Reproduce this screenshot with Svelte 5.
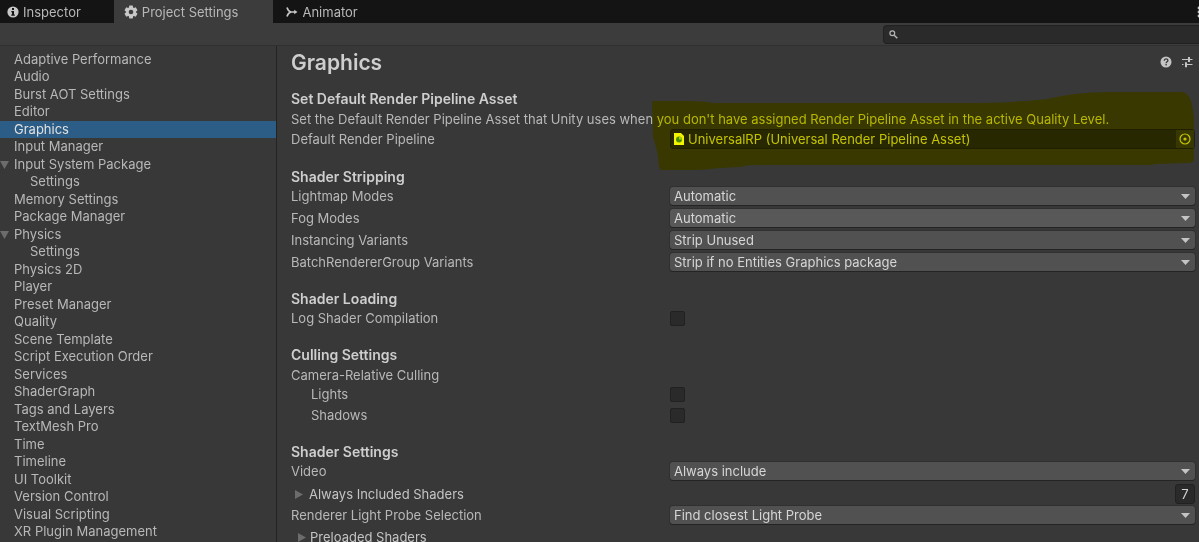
<script>
    const tabs = ['Inspector', 'Project Settings', 'Animator'];
    let activeTab = 'Project Settings';

    const pages = [
        { name: 'Adaptive Performance' },
        { name: 'Audio' },
        { name: 'Burst AOT Settings' },
        { name: 'Editor' },
        { name: 'Graphics' },
        { name: 'Input Manager' },
        { name: 'Input System Package', open: true },
        { name: 'Settings', child: true },
        { name: 'Memory Settings' },
        { name: 'Package Manager' },
        { name: 'Physics', open: true },
        { name: 'Settings', child: true },
        { name: 'Physics 2D' },
        { name: 'Player' },
        { name: 'Preset Manager' },
        { name: 'Quality' },
        { name: 'Scene Template' },
        { name: 'Script Execution Order' },
        { name: 'Services' },
        { name: 'ShaderGraph' },
        { name: 'Tags and Layers' },
        { name: 'TextMesh Pro' },
        { name: 'Time' },
        { name: 'Timeline' },
        { name: 'UI Toolkit' },
        { name: 'Version Control' },
        { name: 'Visual Scripting' },
        { name: 'XR Plugin Management' }
    ];
    let selected = 4;

    const stripping = [
        { id: 'lightmap', label: 'Lightmap Modes', options: ['Automatic', 'Custom'] },
        { id: 'fog', label: 'Fog Modes', options: ['Automatic', 'Custom'], hot: true },
        { id: 'instancing', label: 'Instancing Variants', options: ['Strip Unused', 'Strip All', 'Keep All'] },
        { id: 'brg', label: 'BatchRendererGroup Variants', options: ['Strip if no Entities Graphics package', 'Strip All', 'Keep All'] }
    ];

    let search = '';
    let shaderCount = '7';
</script>

<div class="window">
    <div class="tabs" role="tablist">
        {#each tabs as tab}
            <button type="button" role="tab" class="tab" class:active={tab === activeTab}
                aria-selected={tab === activeTab} on:click={() => (activeTab = tab)}>
                {#if tab === 'Inspector'}
                    <svg width="12" height="12" viewBox="0 0 12 12">
                        <circle cx="6" cy="6" r="5.600" fill="#c8c8c8" />
                        <path d="M5 2h2v2H5zM4.300 5H7v3.600h.8v1.200H4.300V8.600H5V6.200h-.7z" fill="#141414" />
                    </svg>
                {:else if tab === 'Project Settings'}
                    <svg width="14" height="14" viewBox="0 0 14 14">
                        <g fill="#c8c8c8">
                            <rect x="5" y="0.500" width="4" height="13" rx="0.800" />
                            <rect x="5" y="0.500" width="4" height="13" rx="0.800" transform="rotate(60 7 7)" />
                            <rect x="5" y="0.500" width="4" height="13" rx="0.800" transform="rotate(120 7 7)" />
                            <circle cx="7" cy="7" r="5" />
                        </g>
                        <circle cx="7" cy="7" r="2.300" fill="#3c3c3c" />
                    </svg>
                {:else}
                    <svg width="12" height="12" viewBox="0 0 12 12">
                        <path d="M1 1.500Q2 5 4.800 6Q2 7 1 10.500M4.500 6h5" fill="none" stroke="#c8c8c8" stroke-width="1.600" />
                        <path d="M8.200 3.700L11.500 6L8.200 8.300z" fill="#c8c8c8" />
                    </svg>
                {/if}
                <span>{tab}</span>
            </button>
        {/each}
        <button type="button" class="more" aria-label="More">
            <svg width="4" height="12" viewBox="0 0 4 12" fill="#c8c8c8">
                <circle cx="2" cy="2" r="1.400" />
                <circle cx="2" cy="6" r="1.400" />
                <circle cx="2" cy="10" r="1.400" />
            </svg>
        </button>
    </div>

    <div class="toolbar">
        <div class="search">
            <svg width="9" height="9" viewBox="0 0 9 9" fill="none" stroke="#b4b4b4">
                <circle cx="3.300" cy="3.300" r="2.400" stroke-width="1.200" />
                <path d="M5.200 5.200L8.300 8.300" stroke-width="1.500" />
            </svg>
            <input type="text" aria-label="Search" bind:value={search} />
        </div>
    </div>

    <div class="body">
        <nav>
            <ul>
                {#each pages as page, i}
                    <li class:selected={i === selected} class:child={page.child}>
                        {#if page.open}
                            <svg class="fold" width="9" height="8" viewBox="0 0 9 8"><path d="M0 0h9L4.500 8z" fill="#6c6c6c" /></svg>
                        {/if}
                        <a href="#{page.name}" on:click|preventDefault={() => (selected = i)}>{page.name}</a>
                    </li>
                {/each}
            </ul>
        </nav>

        <main>
            <header>
                <h1>Graphics</h1>
                <button type="button" aria-label="Help">
                    <svg width="12" height="12" viewBox="0 0 12 12">
                        <circle cx="6" cy="6" r="5.500" fill="#c4c4c4" />
                        <path d="M4.200 4.700C4.200 2.400 7.900 2.400 7.900 4.500C7.900 5.700 6.100 5.800 6.100 7.200" fill="none" stroke="#383838" stroke-width="1.300" />
                        <rect x="5.400" y="8" width="1.400" height="1.400" fill="#383838" />
                    </svg>
                </button>
                <button type="button" aria-label="Presets">
                    <svg width="12" height="12" viewBox="0 0 12 12" fill="#c4c4c4">
                        <path d="M1 3h6v1H1zM9 3h2.500v1H9zM7 1h2v5H7zM1 8h1.500v1H1zM6 8h5.500v1H6zM4 6.300h2v5H4z" />
                    </svg>
                </button>
            </header>

            <section>
                <h2>Set Default Render Pipeline Asset</h2>
                <p>Set the Default Render Pipeline Asset that Unity uses when you don't have assigned Render Pipeline Asset in the active Quality Level.</p>
                <div class="row tall">
                    <label for="pipeline">Default Render Pipeline</label>
                    <div class="object">
                        <svg width="10" height="12" viewBox="0 0 10 12">
                            <path d="M0 0h7l3 3v9H0z" fill="#f4f4f4" />
                            <circle cx="5" cy="6.500" r="3" fill="#4a8a30" />
                            <path d="M5 6.500V3.500A3 3 0 0 1 8 6.500z" fill="#a8d040" />
                        </svg>
                        <input id="pipeline" type="text" readonly value="UniversalRP (Universal Render Pipeline Asset)" />
                        <button type="button" class="picker" aria-label="Select asset">
                            <svg width="12" height="12" viewBox="0 0 12 12">
                                <circle cx="6" cy="6" r="5" fill="none" stroke="#c4c4c4" stroke-width="1.200" />
                                <circle cx="6" cy="6" r="1.600" fill="#c4c4c4" />
                            </svg>
                        </button>
                        <!-- hand-drawn marker stroke -->
                        <svg class="marker" viewBox="0 0 542 79" preserveAspectRatio="none">
                            <path d="M0 9L38 9Q50 9 62 11H328Q370 10 395 7Q425 0 455 0H529Q536 0 539 9Q542 18 542 28V67Q542 71 536 71L503 72L500 73H103Q95 73 88 75L68 76Q55 78 40 78H14Q8 79 7 75Q6 58 1 46Z" fill="#ffff00" />
                        </svg>
                    </div>
                </div>
            </section>

            <section>
                <h2>Shader Stripping</h2>
                {#each stripping as field}
                    <div class="row">
                        <label for={field.id}>{field.label}</label>
                        <div class="select" class:hot={field.hot}>
                            <select id={field.id}>
                                {#each field.options as option}
                                    <option>{option}</option>
                                {/each}
                            </select>
                            <svg width="9" height="5" viewBox="0 0 9 5"><path d="M0 0h9L4.500 5z" fill="#c4c4c4" /></svg>
                        </div>
                    </div>
                {/each}
            </section>

            <section>
                <h2>Shader Loading</h2>
                <div class="row">
                    <label for="log">Log Shader Compilation</label>
                    <input id="log" type="checkbox" />
                </div>
            </section>

            <section>
                <h2>Culling Settings</h2>
                <p>Camera-Relative Culling</p>
                <div class="row indent">
                    <label for="lights">Lights</label>
                    <input id="lights" type="checkbox" />
                </div>
                <div class="row indent">
                    <label for="shadows">Shadows</label>
                    <input id="shadows" type="checkbox" />
                </div>
            </section>

            <section>
                <h2>Shader Settings</h2>
                <div class="row">
                    <label for="video">Video</label>
                    <div class="select">
                        <select id="video">
                            <option>Always include</option>
                            <option>Don't include</option>
                        </select>
                        <svg width="9" height="5" viewBox="0 0 9 5"><path d="M0 0h9L4.500 5z" fill="#c4c4c4" /></svg>
                    </div>
                </div>
                <div class="row">
                    <button type="button" class="foldout">
                        <svg width="8" height="9" viewBox="0 0 8 9"><path d="M0 0L8 4.500L0 9z" fill="#6c6c6c" /></svg>
                        Always Included Shaders
                    </button>
                    <input class="count" type="text" aria-label="Always Included Shaders count" bind:value={shaderCount} />
                </div>
                <div class="row">
                    <label for="probe">Renderer Light Probe Selection</label>
                    <div class="select">
                        <select id="probe">
                            <option>Find closest Light Probe</option>
                        </select>
                        <svg width="9" height="5" viewBox="0 0 9 5"><path d="M0 0h9L4.500 5z" fill="#c4c4c4" /></svg>
                    </div>
                </div>
                <div class="row">
                    <button type="button" class="foldout nested">
                        <svg width="8" height="9" viewBox="0 0 8 9"><path d="M0 0L8 4.500L0 9z" fill="#6c6c6c" /></svg>
                        Preloaded Shaders
                    </button>
                </div>
            </section>
        </main>
    </div>
</div>

<style>
    :global(body) {
        margin: 0;
        background: #383838;
    }

    .window {
        height: 100vh;
        display: flex;
        flex-direction: column;
        overflow: hidden;
        background: #383838;
        color: #b8b8b8;
        font-family: Inter, "Liberation Sans", sans-serif;
        font-size: 13px;
    }

    button,
    input,
    select {
        margin: 0;
        padding: 0;
        border: 0;
        background: none;
        color: inherit;
        font: inherit;
        outline: none;
    }

    svg {
        flex: none;
        display: block;
    }

    /* Tabs */
    .tabs {
        display: flex;
        flex: none;
        height: 23px;
        background: #141414;
    }

    .tab {
        display: flex;
        align-items: center;
        gap: 4px;
        padding: 0 33px 0 7px;
    }

    .tab.active {
        padding-left: 10px;
        padding-right: 35px;
        background: #3c3c3c;
    }

    .tab:nth-child(3) {
        padding-left: 13px;
    }

    .more {
        margin-left: auto;
        margin-right: -2px;
    }

    .toolbar {
        display: flex;
        flex: none;
        justify-content: flex-end;
        height: 23px;
        padding: 2px 0 1px;
        box-sizing: border-box;
        background: #3c3c3c;
        border-bottom: 1px solid #303030;
    }

    .search {
        display: flex;
        align-items: center;
        gap: 6px;
        width: 316px;
        padding-left: 5px;
        box-sizing: border-box;
        background: #2a2a2a;
        border: 1px solid #212121;
        border-right: 0;
        border-radius: 4px 0 0 4px;
    }

    .search input {
        flex: 1;
        min-width: 0;
    }

    .body {
        display: flex;
        flex: 1;
        min-height: 0;
    }

    /* Page list */
    nav {
        flex: none;
        width: 276px;
        padding-top: 5px;
        border-right: 1px solid #232323;
        overflow: hidden;
    }

    ul {
        margin: 0;
        padding: 0;
        list-style: none;
    }

    li {
        position: relative;
        display: flex;
        height: 17px;
        padding-left: 14px;
        line-height: 17px;
    }

    li:nth-child(even) {
        height: 18px;
    }

    li.child {
        padding-left: 30px;
    }

    li.selected {
        background: #2c5d87;
        color: #e0e0e0;
    }

    li a {
        flex: 1;
        color: inherit;
        text-decoration: none;
    }

    .fold {
        position: absolute;
        left: 0;
        top: 5px;
    }

    /* Settings pane */
    main {
        flex: 1;
        min-width: 0;
        padding: 0 4px 0 14px;
    }

    header {
        display: flex;
        align-items: center;
        gap: 9px;
        height: 32px;
        padding-right: 2px;
    }

    h1 {
        flex: 1;
        margin: 0;
        font-size: 21px;
        font-weight: 600;
        color: #cecece;
    }

    section {
        margin-top: 18px;
    }

    header + section {
        margin-top: 11px;
    }

    h2 {
        margin: 0;
        font-size: 14px;
        font-weight: 600;
        line-height: 20px;
        color: #cecece;
    }

    p {
        margin: 0;
        line-height: 20px;
        white-space: nowrap;
    }

    .row {
        display: grid;
        grid-template-columns: 379px minmax(0, 1fr);
        align-items: center;
        height: 18px;
    }

    .row + .row {
        margin-top: 4px;
    }

    .row.indent + .row.indent {
        margin-top: 3px;
    }

    .row.tall {
        height: 20px;
    }

    .row.indent label {
        padding-left: 20px;
    }

    .object {
        position: relative;
        display: flex;
        align-items: center;
        gap: 4px;
        height: 20px;
        padding-left: 3px;
        box-sizing: border-box;
        background: #282828;
        border: 1px solid #202020;
        border-radius: 3px;
        color: #c4c4c4;
    }

    .object input {
        flex: 1;
        min-width: 0;
    }

    .picker {
        display: flex;
        align-items: center;
        align-self: stretch;
        padding: 0 3px;
        background: #373737;
    }

    .marker {
        position: absolute;
        left: -19px;
        top: -38px;
        width: calc(100% + 19px);
        height: 79px;
        mix-blend-mode: multiply;
        pointer-events: none;
    }

    .select {
        display: flex;
        align-items: center;
        height: 18px;
        padding-right: 5px;
        background: #515151;
        border-radius: 3px;
        box-shadow: 0 1px 0 #242424, 0 0 0 1px #303030;
        color: #d6d6d6;
    }

    .select.hot {
        background: #585858;
    }

    .select select {
        flex: 1;
        min-width: 0;
        padding-left: 4px;
        appearance: none;
        line-height: 18px;
    }

    input[type="checkbox"] {
        width: 15px;
        height: 15px;
        appearance: none;
        box-sizing: border-box;
        background: #2a2a2a;
        border: 1px solid #212121;
        border-radius: 2px;
    }

    .foldout {
        display: flex;
        align-items: center;
        gap: 6px;
        padding-left: 4px;
        line-height: 16px;
        color: #c4c4c4;
    }

    .foldout.nested {
        padding-left: 7px;
        gap: 4px;
    }

    .count {
        justify-self: end;
        width: 20px;
        height: 20px;
        box-sizing: border-box;
        background: #2a2a2a;
        border: 1px solid #212121;
        border-radius: 3px;
        color: #d2d2d2;
        text-align: center;
    }
</style>
